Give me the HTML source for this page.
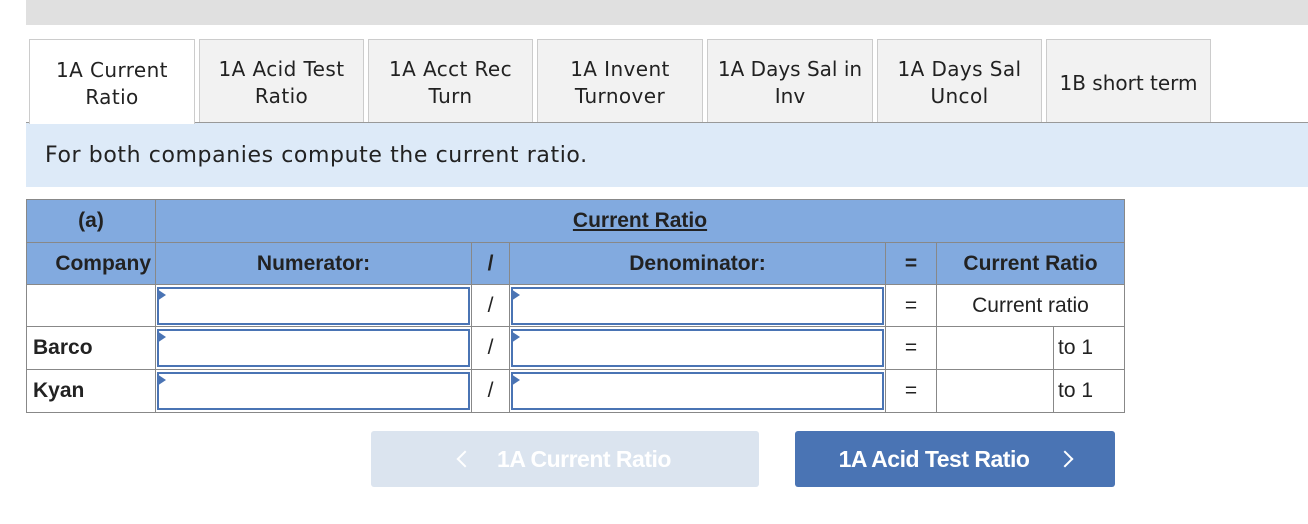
<!DOCTYPE html>
<html><head><style>
body{margin:0;width:1308px;height:524px;background:#fff;position:relative;font-family:"Liberation Sans",sans-serif;overflow:hidden}
.bar{position:absolute;left:26px;top:0;width:1282px;height:25px;background:#e0e0e0}
.tab{position:absolute;top:39px;height:83px;box-sizing:border-box;border:1px solid #ccc;border-bottom:none;background:#f2f2f2;font-family:"DejaVu Sans",sans-serif;font-size:20px;letter-spacing:0.4px;line-height:27px;color:#222;display:flex;align-items:center;justify-content:center;text-align:center;padding-top:4px}
.tab.act{background:#fff;height:85px;z-index:2}
.tline{position:absolute;left:26px;top:122px;width:1282px;height:1px;background:#999}
.panel{position:absolute;left:26px;top:123px;width:1282px;height:64px;background:#ddeaf8;font-family:"DejaVu Sans",sans-serif;font-size:22px;letter-spacing:0.6px;color:#222}
.panel span{position:absolute;left:19px;top:20px}
table{position:absolute;left:26px;top:199px;border-collapse:collapse;font-size:21px;color:#222}
td{border:1px solid #888;padding:0;height:42px;box-sizing:border-box}
.h{background:#82aadf;font-weight:bold;text-align:center}
.inp{position:relative;height:40px}
.inp div{position:absolute;left:1px;top:1px;right:1px;bottom:1px;border:2px solid #4a74b4;background:#fff}
.inp i{position:absolute;left:1px;top:3px;width:0;height:0;border-top:6px solid transparent;border-bottom:6px solid transparent;border-left:9px solid #4a74b4;z-index:2}
.c{text-align:center}
.btn{position:absolute;top:431px;height:56px;border-radius:3px;color:#fff;font-weight:bold;font-size:23px;display:flex;align-items:center;justify-content:center;letter-spacing:-0.5px}
.chev{display:inline-block;width:10px;height:10px;border-top:2px solid #fff;border-right:2px solid #fff}
</style></head><body>
<div class="bar"></div>
<div class="tab act" style="left:29px;width:166px">1A Current<br>Ratio</div>
<div class="tab" style="left:199px;width:165px">1A Acid Test<br>Ratio</div>
<div class="tab" style="left:368px;width:165px">1A Acct Rec<br>Turn</div>
<div class="tab" style="left:537px;width:166px">1A Invent<br>Turnover</div>
<div class="tab" style="left:707px;width:166px;letter-spacing:0">1A Days Sal in<br>Inv</div>
<div class="tab" style="left:877px;width:165px">1A Days Sal<br>Uncol</div>
<div class="tab" style="left:1046px;width:165px;letter-spacing:0">1B short term</div>
<div class="tline"></div>
<div class="panel"><span>For both companies compute the current ratio.</span></div>
<table>
<tr><td class="h" style="width:129px;height:43px">(a)</td><td class="h" colspan="6"><u>Current Ratio</u></td></tr>
<tr><td class="h" style="text-align:right;padding-right:4px">Company</td><td class="h" style="width:316px">Numerator:</td><td class="h" style="width:38px">/</td><td class="h" style="width:376px">Denominator:</td><td class="h" style="width:51px">=</td><td class="h" colspan="2" style="width:188px">Current Ratio</td></tr>
<tr><td></td><td><div class="inp"><i></i><div></div></div></td><td class="c">/</td><td><div class="inp"><i></i><div></div></div></td><td class="c">=</td><td class="c" colspan="2">Current ratio</td></tr>
<tr><td style="font-weight:bold;padding-left:6px;height:43px">Barco</td><td><div class="inp"><i></i><div></div></div></td><td class="c">/</td><td><div class="inp"><i></i><div></div></div></td><td class="c">=</td><td style="width:117px"></td><td style="padding-left:4px">to 1</td></tr>
<tr><td style="font-weight:bold;padding-left:6px;height:43px">Kyan</td><td><div class="inp"><i></i><div></div></div></td><td class="c">/</td><td><div class="inp"><i></i><div></div></div></td><td class="c">=</td><td></td><td style="padding-left:4px">to 1</td></tr>
</table>
<div class="btn" style="left:371px;width:388px;background:#dbe4ef"><span class="chev" style="transform:rotate(-135deg);margin-right:26px"></span>1A Current Ratio</div>
<div class="btn" style="left:795px;width:320px;background:#4a74b4">1A Acid Test Ratio<span class="chev" style="transform:rotate(45deg);margin-left:30px"></span></div>
</body></html>
